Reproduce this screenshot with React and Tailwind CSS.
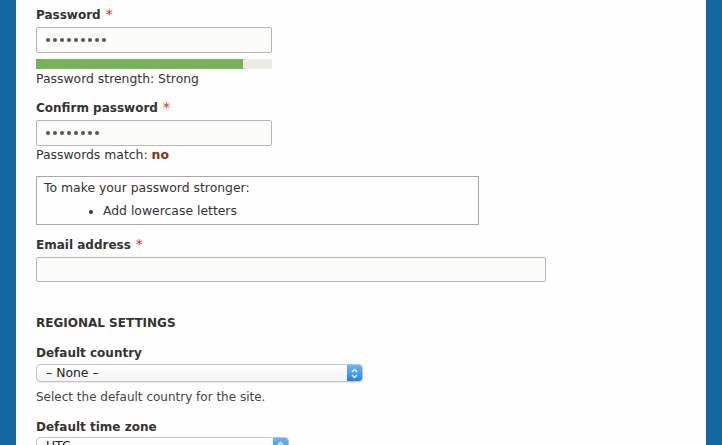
import React from "react";

const font = { fontFamily: '"DejaVu Sans", "Liberation Sans", sans-serif' };

const Req = () => <span className="text-[#e32700] font-normal text-[14px] leading-none ml-[5px]">*</span>;

const Label = ({ children, required, className = "" }) => (
  <div className={"font-bold text-[12px] leading-[18px] h-[18px] text-[#333] " + className}>
    {children}
    {required && <Req />}
  </div>
);

const Dots = ({ n }) => (
  <div className="flex gap-[3px] items-center h-full pl-[9px]">
    {Array.from({ length: n }).map((_, i) => (
      <span key={i} className="w-[4px] h-[4px] rounded-full bg-[#555]" />
    ))}
  </div>
);

const FakeSelect = ({ value, width }) => (
  <div
    className={
      "flex items-stretch h-[18px] rounded-[4px] border border-[#c4c4c4] bg-gradient-to-b from-white to-[#f3f3f3] shadow-[0_1px_1px_rgba(0,0,0,0.08)] overflow-hidden " +
      width
    }
  >
    <div className="flex-1 pl-[9px] text-[12.4px] leading-[16px] text-[#222]">{value}</div>
    <div className="w-[15px] bg-gradient-to-b from-[#6cb3fa] to-[#1a82fb] flex items-center justify-center">
      <svg width="7" height="11" viewBox="0 0 7 11" fill="none" stroke="white" strokeWidth="1.4">
        <path d="M1 4 L3.5 1.5 L6 4" />
        <path d="M1 7 L3.5 9.5 L6 7" />
      </svg>
    </div>
  </div>
);

export default function App() {
  return (
    <div className="w-[722px] h-[445px] bg-[#13679f] overflow-hidden flex" style={font}>
      <div className="ml-[16px] w-[690px] h-full bg-[#fefefe] pl-[20px] pt-[6px] text-[#333] text-[12.4px]">
        <Label required>Password</Label>
        <div className="mt-[3px] w-[236px] h-[26px] border border-[#b5b5b5] bg-[#fbfbf9] rounded-[2px]">
          <Dots n={9} />
        </div>
        <div className="mt-[6px] w-[236px] h-[10px] bg-[#ebeae4]">
          <div className="h-full w-[207px] bg-[#77b259]" />
        </div>
        <div className="mt-[1px] leading-[18px]">Password strength: Strong</div>
        <Label required className="mt-[11px]">Confirm password</Label>
        <div className="mt-[3px] w-[236px] h-[26px] border border-[#b5b5b5] bg-[#fbfbf9] rounded-[2px]">
          <Dots n={8} />
        </div>
        <div className="leading-[18px]">
          Passwords match: <span className="font-bold text-[#8c2e0b]">no</span>
        </div>
        <div className="mt-[12px] w-[443px] h-[49px] border border-[#a8a8a8] px-[7px] pt-[2px]">
          <div className="leading-[18px]">To make your password stronger:</div>
          <ul className="mt-[5px] ml-[50px] list-disc pl-[9px] leading-[18px] marker:text-[12px]">
            <li>Add lowercase letters</li>
          </ul>
        </div>
        <Label required className="mt-[11px]">Email address</Label>
        <div className="mt-[3px] w-[510px] h-[25px] border border-[#b5b5b5] bg-[#fbfbf9] rounded-[2px]" />
        <div className="mt-[32px] font-bold text-[12px] leading-[18px] uppercase">Regional settings</div>
        <Label className="mt-[12px]">Default country</Label>
        <div className="mt-[2px]">
          <FakeSelect value="– None –" width="w-[327px]" />
        </div>
        <div className="mt-[6px] text-[12px] leading-[18px] text-[#444]">Select the default country for the site.</div>
        <Label className="mt-[12px]">Default time zone</Label>
        <div className="mt-[1px]">
          <FakeSelect value="UTC" width="w-[253px]" />
        </div>
      </div>
    </div>
  );
}
